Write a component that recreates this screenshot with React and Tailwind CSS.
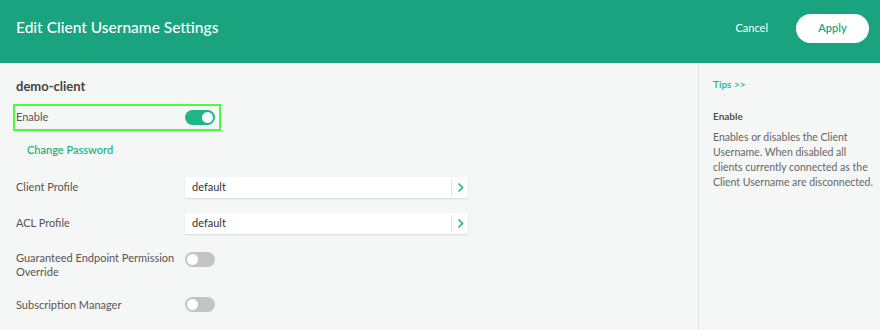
import React from "react";

const Toggle = ({ on }) => (
  <div
    className={`w-[30px] h-[15px] rounded-full flex items-center px-[2px] ${
      on ? "bg-[#1fb585] justify-end" : "bg-[#c4c4c4] justify-start"
    }`}
  >
    <div className="w-[11px] h-[11px] rounded-full bg-white" />
  </div>
);

const SelectBox = ({ value }) => (
  <div className="w-[283px] h-[21px] bg-white rounded-[2px] shadow-[0_1px_2px_rgba(0,0,0,0.12)] flex items-center">
    <span className="flex-1 pl-[7px] text-[11px] text-[#333]">{value}</span>
    <div className="w-px h-[17px] bg-[#e2e2e2]" />
    <div className="w-[16px] flex items-center justify-center">
      <svg width="7" height="11" viewBox="0 0 7 11" fill="none">
        <path d="M1.5 1.5L5.5 5.5L1.5 9.5" stroke="#1fb585" strokeWidth="1.6" />
      </svg>
    </div>
  </div>
);

const App = () => {
  return (
    <div
      className="w-[880px] h-[330px] bg-[#f5f6f6] flex flex-col overflow-hidden"
      style={{ fontFamily: "Lato, 'Noto Sans', sans-serif" }}
    >
      {/* Header */}
      <div className="h-[63px] bg-[#19a37e] flex items-center justify-between pl-4 pr-[11px] pb-[7px] shrink-0">
        <h1 className="text-white text-[15.5px] font-medium">Edit Client Username Settings</h1>
        <div className="flex items-center">
          <button className="text-white text-[11px] mr-[28px]">Cancel</button>
          <button className="w-[73px] h-[29px] rounded-full bg-white text-[#19a37e] text-[11px] font-semibold">
            Apply
          </button>
        </div>
      </div>

      <div className="flex flex-1">
        {/* Main form */}
        <div className="flex-1 pl-4 pt-[15px]">
          <div className="text-[13px] font-bold text-[#444] leading-[16px]">demo-client</div>

          <div className="mt-[10px] -ml-[3px] w-[208px] h-[27px] border-2 border-[#4dfb3a] flex items-center justify-between pl-[1px] pr-[4px]">
            <span className="text-[11px] text-[#555]">Enable</span>
            <Toggle on />
          </div>

          <div className="mt-[11px] ml-[11px] text-[11px] text-[#1fb585] font-semibold">Change Password</div>

          <div className="mt-[18px] flex items-center">
            <span className="w-[169px] text-[11px] text-[#555]">Client Profile</span>
            <SelectBox value="default" />
          </div>

          <div className="mt-[15px] flex items-center">
            <span className="w-[169px] text-[11px] text-[#555]">ACL Profile</span>
            <SelectBox value="default" />
          </div>

          <div className="mt-[17px] flex items-start">
            <span className="w-[169px] text-[11px] leading-[14px] text-[#555]">
              Guaranteed Endpoint Permission Override
            </span>
            <div className="pt-[1px]">
              <Toggle />
            </div>
          </div>

          <div className="mt-[18px] flex items-center">
            <span className="w-[169px] text-[11px] text-[#555]">Subscription Manager</span>
            <Toggle />
          </div>
        </div>

        {/* Tips panel */}
        <div className="w-[182px] border-l border-[#e3e5e5] pl-[14px] pt-[14px]">
          <div className="text-[10px] text-[#1fb585] font-semibold">Tips &gt;&gt;</div>
          <div className="mt-[17px] text-[10px] font-bold text-[#555]">Enable</div>
          <p className="mt-[6px] text-[10.5px] leading-[15px] text-[#666] whitespace-nowrap">
            Enables or disables the Client
            <br />
            Username. When disabled all
            <br />
            clients currently connected as the
            <br />
            Client Username are disconnected.
          </p>
        </div>
      </div>
    </div>
  );
};

export default App;
